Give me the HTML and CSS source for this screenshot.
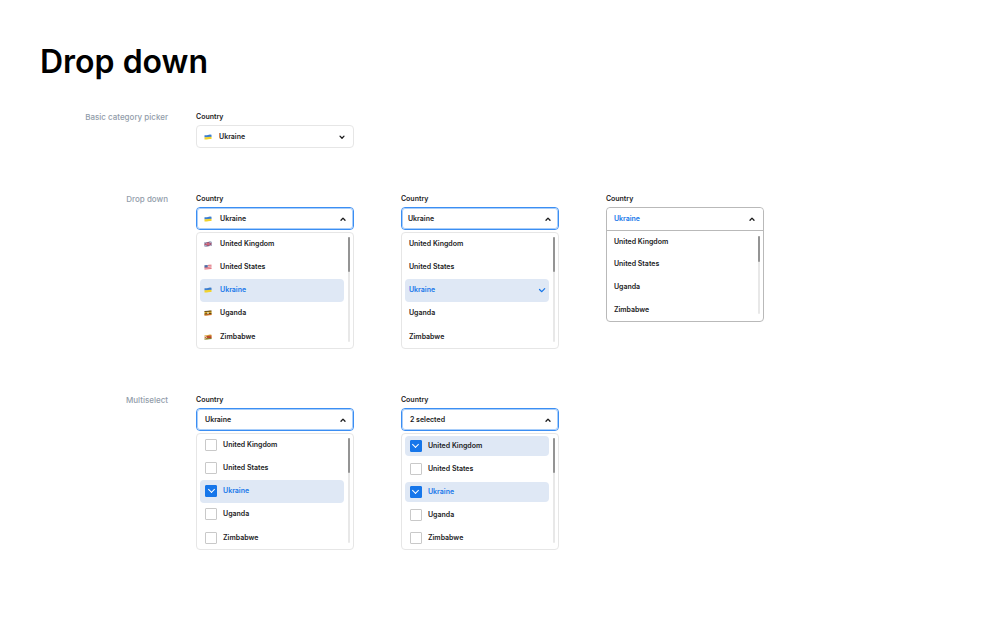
FILE: index.html
```html
<!DOCTYPE html>
<html lang="en">
<head>
<meta charset="utf-8">
<meta name="viewport" content="width=device-width, initial-scale=1">
<title>Drop down</title>
<link rel="stylesheet" href="styles.css">
</head>
<body>
<svg class="sprite" aria-hidden="true">
  <symbol id="up" viewBox="0 0 8 8"><path d="M2 5.2 4 3.1l2 2.1" fill="none" stroke="currentColor" stroke-width="1.3" stroke-linecap="round" stroke-linejoin="round"/></symbol>
  <symbol id="down" viewBox="0 0 8 8"><path d="M2 3.1 4 5.2l2-2.1" fill="none" stroke="currentColor" stroke-width="1.3" stroke-linecap="round" stroke-linejoin="round"/></symbol>
  <symbol id="tick" viewBox="0 0 8 8"><path d="M1.500 3.500 3.800 5.700 6.700 2.700" fill="none" stroke="currentColor" stroke-width="1.200" stroke-linecap="round" stroke-linejoin="round"/></symbol>
  <symbol id="ua" viewBox="0 0 8 6"><path d="M.5 1.2Q2.500 1.500 4 .9T7.500.7V3Q5.500 2.700 4 3.200T.5 3.200Z" fill="#3b7dd0"/><path d="M.5 3.200Q2.500 3.500 4 3.100T7.500 2.900V5Q5.500 4.700 4 5.200T.5 5.400Z" fill="#f2d32c"/></symbol>
  <symbol id="gb" viewBox="0 0 8 6"><path d="M.5 1.200Q2.500 1.500 4 .9T7.500.7V5Q5.500 4.700 4 5.200T.5 5.400Z" fill="#59628f"/><path d="m1 1.500 6 3.300M1 5l6-4" stroke="#e5cbd5" stroke-width=".8"/><path d="M4 1v4.200M.5 3.300l7-.4" stroke="#d94f62" stroke-width="1"/></symbol>
  <symbol id="us" viewBox="0 0 8 6"><path d="M.5 1.200Q2.500 1.500 4 .9T7.500.7V5Q5.500 4.700 4 5.200T.5 5.400Z" fill="#f3dadd"/><path d="M4 1.400 7.500 1.200M.5 3.700 7.500 2.900M.5 5 7.500 4.500" stroke="#df5967" stroke-width=".8"/><path d="M.5 1.200 3.700 1.100v2.200L.5 3.500Z" fill="#4d6ca5"/></symbol>
  <symbol id="ug" viewBox="0 0 8 6"><path d="M.5 1.200Q2.500 1.500 4 .9T7.500.7V5Q5.500 4.700 4 5.200T.5 5.400Z" fill="#d6a520"/><path d="M.5 1.500 7.500 1M.5 4 7.500 3.400" stroke="#3a2a15" stroke-width=".8"/><path d="M.5 5 7.500 4.600" stroke="#c44b25" stroke-width=".8"/><circle cx="4" cy="3" r=".9" fill="#eee2c5"/></symbol>
  <symbol id="zw" viewBox="0 0 8 6"><path d="M.5 1.200Q2.500 1.500 4 .9T7.500.7V5Q5.500 4.700 4 5.200T.5 5.400Z" fill="#d7a83a"/><path d="M2.500 2.500 7.500 2.100M2.500 3.800 7.500 3.400" stroke="#b52d27" stroke-width=".9"/><path d="M.5 5 7.500 4.600" stroke="#4b6a2a" stroke-width=".7"/><path d="M.5 1.300 3 3.200.5 5.200Z" fill="#e9ddd0"/><circle cx="1.400" cy="3.300" r=".6" fill="#c24a35"/></symbol>
</svg>
<main class="page">
  <h1 class="title">Drop down</h1>

  <section class="section">
    <h2 class="caption">Basic category picker</h2>
    <div class="fields">
      <div class="field">
        <label class="label" for="basic">Country</label>
        <div class="picker">
          <select class="native" id="basic"><option>Ukraine</option><option>United Kingdom</option><option>United States</option><option>Uganda</option><option>Zimbabwe</option></select>
          <svg class="flag picker-flag" aria-hidden="true"><use href="#ua"/></svg>
          <svg class="icon picker-arrow" aria-hidden="true"><use href="#down"/></svg>
        </div>
      </div>
    </div>
  </section>

  <section class="section">
    <h2 class="caption">Drop down</h2>
    <div class="fields">
      <div class="field">
        <label class="label" for="flags">Country</label>
        <button class="trigger trigger-flag" id="flags" type="button" aria-haspopup="listbox" aria-expanded="true"><svg class="flag" aria-hidden="true"><use href="#ua"/></svg><span class="text">Ukraine</span><svg class="icon" aria-hidden="true"><use href="#up"/></svg></button>
        <div class="panel">
          <ul class="list" role="listbox" aria-label="Country">
            <li class="option" role="option"><svg class="flag" aria-hidden="true"><use href="#gb"/></svg><span class="text">United Kingdom</span></li>
            <li class="option" role="option"><svg class="flag" aria-hidden="true"><use href="#us"/></svg><span class="text">United States</span></li>
            <li class="option marked current" role="option" aria-selected="true"><svg class="flag" aria-hidden="true"><use href="#ua"/></svg><span class="text">Ukraine</span></li>
            <li class="option" role="option"><svg class="flag" aria-hidden="true"><use href="#ug"/></svg><span class="text">Uganda</span></li>
            <li class="option" role="option"><svg class="flag" aria-hidden="true"><use href="#zw"/></svg><span class="text">Zimbabwe</span></li>
          </ul>
          <div class="track"><div class="thumb"></div></div>
        </div>
      </div>
      <div class="field">
        <label class="label" for="plain">Country</label>
        <button class="trigger" id="plain" type="button" aria-haspopup="listbox" aria-expanded="true"><span class="text">Ukraine</span><svg class="icon" aria-hidden="true"><use href="#up"/></svg></button>
        <div class="panel">
          <ul class="list" role="listbox" aria-label="Country">
            <li class="option" role="option"><span class="text">United Kingdom</span></li>
            <li class="option" role="option"><span class="text">United States</span></li>
            <li class="option marked current" role="option" aria-selected="true"><span class="text">Ukraine</span><svg class="icon" aria-hidden="true"><use href="#tick"/></svg></li>
            <li class="option" role="option"><span class="text">Uganda</span></li>
            <li class="option" role="option"><span class="text">Zimbabwe</span></li>
          </ul>
          <div class="track"><div class="thumb"></div></div>
        </div>
      </div>
      <div class="field">
        <label class="label" for="joined">Country</label>
        <div class="joined">
          <button class="trigger trigger-joined current" id="joined" type="button" aria-haspopup="listbox" aria-expanded="true"><span class="text">Ukraine</span><svg class="icon" aria-hidden="true"><use href="#up"/></svg></button>
          <div class="panel panel-joined">
            <ul class="list" role="listbox" aria-label="Country">
              <li class="option" role="option"><span class="text">United Kingdom</span></li>
              <li class="option" role="option"><span class="text">United States</span></li>
              <li class="option" role="option"><span class="text">Uganda</span></li>
              <li class="option" role="option"><span class="text">Zimbabwe</span></li>
            </ul>
            <div class="track"><div class="thumb"></div></div>
          </div>
        </div>
      </div>
    </div>
  </section>

  <section class="section">
    <h2 class="caption">Multiselect</h2>
    <div class="fields">
      <div class="field">
        <label class="label" for="multi-one">Country</label>
        <button class="trigger trigger-multi" id="multi-one" type="button" aria-expanded="true"><span class="text">Ukraine</span><svg class="icon" aria-hidden="true"><use href="#up"/></svg></button>
        <div class="panel">
          <div class="list" role="group" aria-label="Country">
            <label class="option check"><input class="box" type="checkbox"><span class="text">United Kingdom</span></label>
            <label class="option check"><input class="box" type="checkbox"><span class="text">United States</span></label>
            <label class="option check marked current"><input class="box" type="checkbox" checked><span class="text">Ukraine</span></label>
            <label class="option check"><input class="box" type="checkbox"><span class="text">Uganda</span></label>
            <label class="option check"><input class="box" type="checkbox"><span class="text">Zimbabwe</span></label>
          </div>
          <div class="track"><div class="thumb"></div></div>
        </div>
      </div>
      <div class="field">
        <label class="label" for="multi-two">Country</label>
        <button class="trigger trigger-multi" id="multi-two" type="button" aria-expanded="true"><span class="text">2 selected</span><svg class="icon" aria-hidden="true"><use href="#up"/></svg></button>
        <div class="panel panel-compact">
          <div class="list" role="group" aria-label="Country">
            <label class="option check marked"><input class="box" type="checkbox" checked><span class="text">United Kingdom</span></label>
            <label class="option check"><input class="box" type="checkbox"><span class="text">United States</span></label>
            <label class="option check marked current"><input class="box" type="checkbox" checked><span class="text">Ukraine</span></label>
            <label class="option check"><input class="box" type="checkbox"><span class="text">Uganda</span></label>
            <label class="option check"><input class="box" type="checkbox"><span class="text">Zimbabwe</span></label>
          </div>
          <div class="track"><div class="thumb"></div></div>
        </div>
      </div>
    </div>
  </section>
</main>
</body>
</html>
```

FILE: styles.css
```css
* { box-sizing: border-box; }

body {
  margin: 0;
  background: #fff;
  color: #1b1b1d;
  font: 600 7px/12px Inter, "Open Sans", sans-serif;
}

.sprite { display: none; }

.page {
  display: flex;
  flex-direction: column;
  gap: 45px;
  padding: 42px 24% 40px 40px;
}

.title {
  margin: 0 0 -16px;
  color: #000;
  font-size: 32px;
  font-weight: 600;
  line-height: 40px;
}

.section {
  display: grid;
  grid-template-columns: 128px minmax(0, 1fr);
  gap: 28px;
}

.caption {
  margin: 0;
  color: #929daa;
  font-size: 8px;
  font-weight: 500;
  text-align: right;
}

.fields {
  display: grid;
  grid-template-columns: repeat(3, minmax(0, 1fr));
  gap: 47px;
  align-items: start;
}

.field {
  display: flex;
  flex-direction: column;
  gap: 2px;
}

.label { align-self: flex-start; }

.trigger {
  display: flex;
  align-items: center;
  height: 23px;
  padding: 0 6px;
  border: 1px solid #3b8ef3;
  border-radius: 4px;
  outline: 1px solid #a9cefa;
  outline-offset: -2px;
  background: #fff;
  color: inherit;
  font: inherit;
  text-align: left;
}

.trigger-flag { padding-left: 7px; }

.trigger-multi { padding-left: 8px; }

.text { flex: 1; }

.icon {
  flex: none;
  width: 8px;
  height: 8px;
}

.flag {
  flex: none;
  width: 8px;
  height: 6px;
  margin-right: 8px;
}

.picker {
  display: grid;
  align-items: center;
}

.picker > * { grid-area: 1 / 1; }

.native {
  width: 100%;
  height: 23px;
  padding: 0 22px;
  border: 1px solid #e6e6e6;
  border-radius: 4px;
  appearance: none;
  background: #fff;
  color: inherit;
  font: inherit;
}

.picker-flag {
  margin-left: 8px;
  pointer-events: none;
}

.picker-arrow {
  justify-self: end;
  margin-right: 8px;
  pointer-events: none;
}

.panel {
  display: flex;
  gap: 4px;
  min-height: 117px;
  padding: 0 3px;
  border: 1px solid #e6e6e6;
  border-radius: 4px;
}

.list {
  display: flex;
  flex: 1;
  flex-direction: column;
  justify-content: space-between;
  margin: 0;
  padding: 0;
  list-style: none;
}

.option {
  display: flex;
  align-items: center;
  min-height: 23px;
  padding: 0 3px 0 4px;
  border-radius: 4px;
}

.option:first-child { min-height: 22px; }

.marked { background: #dfe8f5; }

.current { color: #1676ea; }

.track {
  width: 2px;
  margin: 4px 0 6px;
  border-radius: 1px;
  background: #e8e8e8;
}

.thumb {
  height: 35px;
  border-radius: 1px;
  background: #949494;
}

.joined {
  border: 1px solid #b9b9b9;
  border-radius: 4px;
}

.trigger-joined {
  width: 100%;
  border: 0;
  border-bottom: 1px solid #b9b9b9;
  border-radius: 4px 4px 0 0;
  outline: 0;
  padding: 0 7px;
  color: #1676ea;
}

.trigger-joined .icon { color: #1b1b1d; }

.panel-joined {
  min-height: 90px;
  border: 0;
}

.panel-joined .option:first-child { min-height: 21px; }

.panel-joined .track { margin: 5px 0 7px; }

.panel-joined .thumb { height: 26px; }

.check {
  gap: 6px;
  padding-left: 5px;
}

.box {
  display: grid;
  flex: none;
  place-items: center;
  width: 12px;
  height: 12px;
  margin: 0;
  border: 1px solid #c9c9c9;
  border-radius: 1px;
  appearance: none;
  background: #fff;
}

.box:checked {
  border-color: #1676ea;
  background: #1676ea;
}

.box:checked::after {
  width: 4px;
  height: 4px;
  margin-bottom: 3px;
  border: solid #fff;
  border-width: 0 0 1px 1px;
  content: "";
  transform: rotate(-45deg);
}

.panel-compact .list { padding: 2px 0 1px; }

.panel-compact .option,
.panel-compact .option:first-child { min-height: 20px; }
```
